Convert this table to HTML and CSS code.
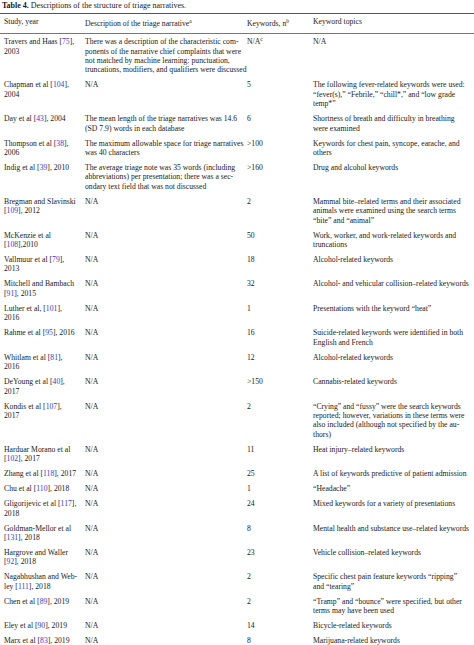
FILE: index.html
```html
<!DOCTYPE html>
<html>
<head>
<meta charset="utf-8">
<link rel="stylesheet" href="styles.css">
</head>
<body>
<div class="caption"><b>Table 4.</b> Descriptions of the structure of triage narratives.</div>
<table class="tbl">
<colgroup><col class="c1"><col class="c2"><col class="c3"><col class="c4"></colgroup>
<thead>
<tr><th class="h1">Study, year</th><th>Description of the triage narrative<sup>a</sup></th><th>Keywords, n<sup>b</sup></th><th class="h1">Keyword topics</th></tr>
</thead>
<tbody>
<tr><td>Travers and Haas [<a>75</a>],<br>2003</td><td>There was a description of the characteristic com-<br>ponents of the narrative chief complaints that were<br>not matched by machine learning: punctuation,<br>truncations, modifiers, and qualifiers were discussed</td><td>N/A<sup>c</sup></td><td>N/A</td></tr>
<tr><td>Chapman et al [<a>104</a>],<br>2004</td><td>N/A</td><td>5</td><td>The following fever-related keywords were used:<br>“fever(s),” “Febrile,” “chill*,” and “low grade<br>temp*”</td></tr>
<tr><td>Day et al [<a>43</a>], 2004</td><td>The mean length of the triage narratives was 14.6<br>(SD 7.9) words in each database</td><td>6</td><td>Shortness of breath and difficulty in breathing<br>were examined</td></tr>
<tr><td>Thompson et al [<a>38</a>],<br>2006</td><td>The maximum allowable space for triage narratives<br>was 40 characters</td><td>&gt;100</td><td>Keywords for chest pain, syncope, earache, and<br>others</td></tr>
<tr><td>Indig et al [<a>39</a>], 2010</td><td>The average triage note was 35 words (including<br>abbreviations) per presentation; there was a sec-<br>ondary text field that was not discussed</td><td>&gt;160</td><td>Drug and alcohol keywords</td></tr>
<tr><td>Bregman and Slavinski<br>[<a>109</a>], 2012</td><td>N/A</td><td>2</td><td>Mammal bite–related terms and their associated<br>animals were examined using the search terms<br>“bite” and “animal”</td></tr>
<tr><td>McKenzie et al<br>[<a>108</a>],2010</td><td>N/A</td><td>50</td><td>Work, worker, and work-related keywords and<br>truncations</td></tr>
<tr><td>Vallmuur et al [<a>79</a>],<br>2013</td><td>N/A</td><td>18</td><td>Alcohol-related keywords</td></tr>
<tr><td>Mitchell and Bambach<br>[<a>91</a>], 2015</td><td>N/A</td><td>32</td><td>Alcohol- and vehicular collision–related keywords</td></tr>
<tr><td>Luther et al, [<a>101</a>],<br>2016</td><td>N/A</td><td>1</td><td>Presentations with the keyword “heat”</td></tr>
<tr><td>Rahme et al [<a>95</a>], 2016</td><td>N/A</td><td>16</td><td>Suicide-related keywords were identified in both<br>English and French</td></tr>
<tr><td>Whitlam et al [<a>81</a>],<br>2016</td><td>N/A</td><td>12</td><td>Alcohol-related keywords</td></tr>
<tr><td>DeYoung et al [<a>40</a>],<br>2017</td><td>N/A</td><td>&gt;150</td><td>Cannabis-related keywords</td></tr>
<tr><td>Kondis et al [<a>107</a>],<br>2017</td><td>N/A</td><td>2</td><td>“Crying” and “fussy” were the search keywords<br>reported; however, variations in these terms were<br>also included (although not specified by the au-<br>thors)</td></tr>
<tr><td>Harduar Morano et al<br>[<a>102</a>], 2017</td><td>N/A</td><td>11</td><td>Heat injury–related keywords</td></tr>
<tr><td>Zhang et al [<a>118</a>], 2017</td><td>N/A</td><td>25</td><td>A list of keywords predictive of patient admission</td></tr>
<tr><td>Chu et al [<a>110</a>], 2018</td><td>N/A</td><td>1</td><td>“Headache”</td></tr>
<tr><td>Gligorijevic et al [<a>117</a>],<br>2018</td><td>N/A</td><td>24</td><td>Mixed keywords for a variety of presentations</td></tr>
<tr><td>Goldman-Mellor et al<br>[<a>131</a>], 2018</td><td>N/A</td><td>8</td><td>Mental health and substance use–related keywords</td></tr>
<tr><td>Hargrove and Waller<br>[<a>92</a>], 2018</td><td>N/A</td><td>23</td><td>Vehicle collision–related keywords</td></tr>
<tr><td>Nagabhushan and Web-<br>ley [<a>111</a>], 2018</td><td>N/A</td><td>2</td><td>Specific chest pain feature keywords “ripping”<br>and “tearing”</td></tr>
<tr><td>Chen et al [<a>89</a>], 2019</td><td>N/A</td><td>2</td><td>“Tramp” and “bounce” were specified, but other<br>terms may have been used</td></tr>
<tr><td>Eley et al [<a>90</a>], 2019</td><td>N/A</td><td>14</td><td>Bicycle-related keywords</td></tr>
<tr><td>Marx et al [<a>83</a>], 2019</td><td>N/A</td><td>8</td><td>Marijuana-related keywords</td></tr>
</tbody>
</table>
</body>
</html>
```
FILE: styles.css
```css
html, body {
  margin: 0;
  padding: 0;
  background: #ffffff;
}
body {
  font-family: "Liberation Serif", "Times New Roman", serif;
  color: #1a1a1a;
  font-size: 7.7px;
  width: 474px;
  overflow: hidden;
}
.caption {
  font-size: 8px;
  line-height: 10px;
  padding: 1px 0 0 2px;
  height: 12px;
}
.caption b {
  font-weight: bold;
}
.tbl {
  width: 474px;
  border-collapse: collapse;
  table-layout: fixed;
}
.c1 { width: 81px; }
.c2 { width: 162px; }
.c3 { width: 66px; }
.c4 { width: 165px; }
.tbl thead tr {
  border-top: 1.5px solid #555555;
  border-bottom: 1px solid #777777;
}
.tbl th {
  font-weight: normal;
  text-align: left;
  vertical-align: top;
  line-height: 9.4px;
  padding: 5px 3px 5px 4px;
  white-space: nowrap;
}
.tbl th.h1 {
  padding-top: 3px;
  padding-bottom: 7px;
}
.tbl sup {
  font-size: 5.5px;
  line-height: 0;
  vertical-align: 3px;
}
.tbl td {
  vertical-align: top;
  line-height: 9.4px;
  padding: 2.8px 3px 2.8px 4px;
  white-space: nowrap;
}
.tbl a {
  color: #3a3ac8;
}
```
